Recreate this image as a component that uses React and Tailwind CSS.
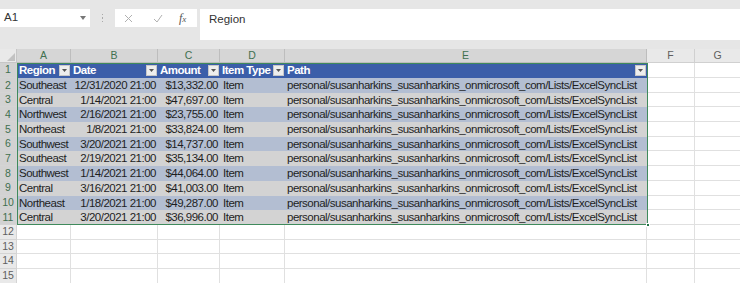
import React from "react";

const cols = [
  { key: "A", w: "w-[54px]" },
  { key: "B", w: "w-[87px]" },
  { key: "C", w: "w-[62px]" },
  { key: "D", w: "w-[65px]" },
  { key: "E", w: "w-[362px]" },
];

const path = "personal/susanharkins_susanharkins_onmicrosoft_com/Lists/ExcelSyncList";

const rows = [
  ["Southeast", "12/31/2020 21:00", "$13,332.00"],
  ["Central", "1/14/2021 21:00", "$47,697.00"],
  ["Northwest", "2/16/2021 21:00", "$23,755.00"],
  ["Northeast", "1/8/2021 21:00", "$33,824.00"],
  ["Southwest", "3/20/2021 21:00", "$14,737.00"],
  ["Southeast", "2/19/2021 21:00", "$35,134.00"],
  ["Southwest", "1/14/2021 21:00", "$44,064.00"],
  ["Central", "3/16/2021 21:00", "$41,003.00"],
  ["Northeast", "1/18/2021 21:00", "$49,287.00"],
  ["Central", "3/20/2021 21:00", "$36,996.00"],
];

function FilterBtn() {
  return (
    <span className="ml-auto mr-[1px] flex h-[11px] w-[11px] shrink-0 items-center justify-center border border-[#c8c8c8] bg-[#eeeeee]">
      <svg width="5" height="3" viewBox="0 0 5 3">
        <path d="M0 0h5L2.5 3z" fill="#555" />
      </svg>
    </span>
  );
}

function Header({ label }) {
  return (
    <div className="flex h-full items-center whitespace-nowrap bg-[#3b5ea9] pl-[2px] font-bold text-white">
      <span>{label}</span>
      <FilterBtn />
    </div>
  );
}

function RowNum({ n, sel }) {
  return (
    <div
      className={
        "flex w-[17px] shrink-0 items-center justify-center border-b border-r border-[#d4d4d4] text-[10.5px] tracking-normal " +
        (sel ? "bg-[#d2d2d2] text-[#3f7050]" : "bg-[#e9e9e9] text-[#5f5f5f]")
      }
    >
      {n}
    </div>
  );
}

export default function App() {
  return (
    <div
      className="relative h-[283px] w-[740px] overflow-hidden bg-white text-[11px] text-[#1e1e1e]"
      style={{ fontFamily: "'Liberation Sans', Arial, sans-serif" }}
    >
      {/* top bar */}
      <div className="flex h-[49px] bg-[#e6e6e6] pt-[9px]">
        <div className="flex h-[18px] w-[90px] items-center bg-white pl-[4px] pr-[4px] text-[11.5px] text-[#333]">
          <span>A1</span>
          <svg className="ml-auto" width="6" height="4" viewBox="0 0 6 4">
            <path d="M0 0h6L3 4z" fill="#777" />
          </svg>
        </div>
        <div className="flex h-[18px] w-[25px] flex-col items-center justify-center gap-[2px]">
          <span className="h-[1.5px] w-[1.5px] bg-[#aaa]" />
          <span className="h-[1.5px] w-[1.5px] bg-[#aaa]" />
          <span className="h-[1.5px] w-[1.5px] bg-[#aaa]" />
        </div>
        <div className="flex h-[18px] w-[82px] items-center bg-white">
          <svg className="ml-[9px]" width="9" height="9" viewBox="0 0 9 9">
            <path d="M1 1l7 7M8 1L1 8" stroke="#b0b0b0" strokeWidth="1" />
          </svg>
          <svg className="ml-[20px]" width="10" height="9" viewBox="0 0 10 9">
            <path d="M1 5l3 3 5-7" stroke="#b0b0b0" strokeWidth="1" fill="none" />
          </svg>
          <span
            className="ml-[16px] text-[12px] italic text-[#555]"
            style={{ fontFamily: "'Liberation Serif', serif" }}
          >
            f<span className="text-[9px]">x</span>
          </span>
        </div>
        <div className="ml-[3px] h-[31px] flex-1 bg-white pl-[9px] pt-[2px] text-[11.5px] text-[#333]">
          Region
        </div>
      </div>

      {/* column headers */}
      <div className="flex h-[14px] text-[10.5px]">
        <div className="relative w-[17px] shrink-0 border-r border-b border-[#c6c6c6] bg-[#e9e9e9]">
          <svg className="absolute bottom-[1px] right-[1px]" width="8" height="8" viewBox="0 0 8 8">
            <path d="M8 0v8H0z" fill="#c2c2c2" />
          </svg>
        </div>
        {cols.map((c) => (
          <div
            key={c.key}
            className={
              c.w +
              " flex shrink-0 items-center justify-center border-r border-b border-[#bdbdbd] bg-[#d6d6d6] text-[#3f7050]"
            }
          >
            {c.key}
          </div>
        ))}
        <div className="flex w-[48px] shrink-0 items-center justify-center border-r border-b border-[#d0d0d0] bg-[#e9e9e9] text-[#5f5f5f]">
          F
        </div>
        <div className="flex flex-1 items-center justify-center border-b border-[#d0d0d0] bg-[#e9e9e9] text-[#5f5f5f]">
          G
        </div>
      </div>

      <div className="text-[11.5px] tracking-[-0.5px]">
        {/* row 1 (table headers) */}
        <div className="flex h-[15px]">
          <RowNum n={1} sel />
          <div className="w-[54px] shrink-0"><Header label="Region" /></div>
          <div className="w-[87px] shrink-0"><Header label="Date" /></div>
          <div className="w-[62px] shrink-0"><Header label="Amount" /></div>
          <div className="w-[65px] shrink-0"><Header label="Item Type" /></div>
          <div className="w-[362px] shrink-0"><Header label="Path" /></div>
          <div className="w-[48px] shrink-0 border-r border-b border-[#e0e0e0]" />
          <div className="flex-1 border-b border-[#e0e0e0]" />
        </div>

        {/* data rows */}
        {rows.map((r, i) => {
          const bg = i % 2 === 0 ? "bg-[#b3bed2]" : "bg-[#d3d3d3]";
          return (
            <div key={i} className="flex h-[14.7px] whitespace-nowrap leading-[14.7px]">
              <RowNum n={i + 2} sel />
              <div className={"w-[54px] shrink-0 overflow-hidden pl-[2px] " + bg}>{r[0]}</div>
              <div className={"w-[87px] shrink-0 overflow-hidden pr-[2px] text-right " + bg}>{r[1]}</div>
              <div className={"w-[62px] shrink-0 overflow-hidden pr-[2px] text-right " + bg}>{r[2]}</div>
              <div className={"w-[65px] shrink-0 pl-[3px] " + bg}>Item</div>
              <div className={"w-[362px] shrink-0 overflow-hidden pl-[2px] " + bg}>{path}</div>
              <div className="w-[48px] shrink-0 border-r border-b border-[#e0e0e0]" />
              <div className="flex-1 border-b border-[#e0e0e0]" />
            </div>
          );
        })}
      </div>

      {/* empty rows */}
      {[12, 13, 14, 15].map((n) => (
        <div key={n} className="flex h-[14.7px]">
          <RowNum n={n} />
          {cols.map((c) => (
            <div key={c.key} className={c.w + " shrink-0 border-r border-b border-[#e0e0e0]"} />
          ))}
          <div className="w-[48px] shrink-0 border-r border-b border-[#e0e0e0]" />
          <div className="flex-1 border-b border-[#e0e0e0]" />
        </div>
      ))}

      {/* selection outline over A1:E11 */}
      <div className="pointer-events-none absolute left-[17px] top-[63px] h-[162px] w-[631px] border border-[#3f8a5c]">
        <span className="absolute -bottom-[3px] -right-[3px] h-[4px] w-[4px] border border-white bg-[#217346]" />
      </div>
    </div>
  );
}
